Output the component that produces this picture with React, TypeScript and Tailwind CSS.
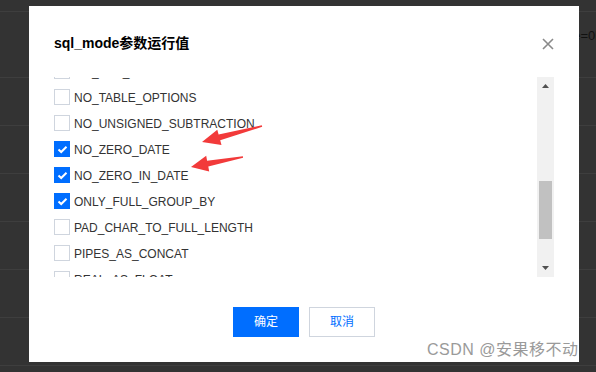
import React from "react";

const modes: { name: string; checked: boolean }[] = [
  { name: "NO_KEY_OPTIONS", checked: false },
  { name: "NO_TABLE_OPTIONS", checked: false },
  { name: "NO_UNSIGNED_SUBTRACTION", checked: false },
  { name: "NO_ZERO_DATE", checked: true },
  { name: "NO_ZERO_IN_DATE", checked: true },
  { name: "ONLY_FULL_GROUP_BY", checked: true },
  { name: "PAD_CHAR_TO_FULL_LENGTH", checked: false },
  { name: "PIPES_AS_CONCAT", checked: false },
  { name: "REAL_AS_FLOAT", checked: false },
  { name: "STRICT_ALL_TABLES", checked: false },
];

const sans = { fontFamily: '"Liberation Sans", Arial, "Noto Sans CJK SC", sans-serif' };

function Checkbox({ checked }: { checked: boolean }) {
  if (checked) {
    return (
      <span className="w-4 h-4 shrink-0 bg-[#006eff] flex items-center justify-center">
        <svg width="11" height="9" viewBox="0 0 11 9">
          <path d="M1.5 4.5 L4.2 7 L9.5 1.8" fill="none" stroke="#fff" strokeWidth="2" />
        </svg>
      </span>
    );
  }
  return <span className="w-4 h-4 shrink-0 border border-[#cfd5de] bg-white" />;
}

export default function App() {
  return (
    <div className="relative w-[596px] h-[372px] bg-[#333333] overflow-hidden" style={sans}>
      {/* table rows behind the overlay */}
      <div className="h-[12px] border-b border-[#3e3e3e]" />
      <div className="h-[66px] border-b border-[#3e3e3e] flex items-start pt-[17px] pl-[566px]">
        <span className="text-[13px] leading-[14px] text-[#111] whitespace-nowrap">de=0l</span>
      </div>
      {[0, 1, 2, 3, 4, 5].map(i => (
        <div key={i} className="h-[48px] border-b border-[#3e3e3e]" />
      ))}

      {/* dialog */}
      <div className="absolute left-[29px] top-[6px] w-[550px] h-[356px] bg-white px-[25px] pt-[27px]">
        <div className="h-[20px] flex items-center text-[14px] font-bold text-black">
          sql_mode参数运行值
        </div>
        <button className="absolute right-[25px] top-[32px] w-[12px] h-[12px]">
          <svg width="12" height="12" viewBox="0 0 12 12">
            <path d="M1 1 L11 11 M11 1 L1 11" stroke="#8a8a8a" strokeWidth="1.6" />
          </svg>
        </button>

        <div className="mt-[24px] h-[200px] flex">
          <div className="flex-1 overflow-hidden">
            <div className="-mt-[19px]">
              {modes.map(m => (
                <div key={m.name} className="h-[26px] flex items-center gap-1">
                  <Checkbox checked={m.checked} />
                  <span className="text-[12px] text-[#333] leading-none mt-[2px]">{m.name}</span>
                </div>
              ))}
            </div>
          </div>
          <div className="relative w-[17px] bg-[#f1f1f1]">
            <svg className="absolute left-[5px] top-[7px]" width="7" height="4" viewBox="0 0 7 4">
              <path d="M3.5 0 L7 4 L0 4 Z" fill="#505050" />
            </svg>
            <div className="absolute left-[2px] top-[104px] w-[13px] h-[58px] bg-[#c1c1c1]" />
            <svg className="absolute left-[5px] top-[189px]" width="7" height="4" viewBox="0 0 7 4">
              <path d="M0 0 L7 0 L3.5 4 Z" fill="#505050" />
            </svg>
          </div>
        </div>

        <div className="mt-[30px] flex justify-center gap-[10px]">
          <button className="w-[66px] h-[30px] bg-[#006eff] text-white text-[12px]">确定</button>
          <button className="w-[66px] h-[30px] bg-white border border-[#cfd5de] text-[#006eff] text-[12px]">取消</button>
        </div>
      </div>

      {/* annotation arrows */}
      <svg className="absolute left-0 top-0 pointer-events-none" width="596" height="372">
        <polygon points="202,142 217.3,129.7 218.6,134.5 261.8,125.2 262.2,126.8 220.2,140.3 221.5,145.1" fill="#f23a3a" />
        <polygon points="191,167 206.2,155.8 207.1,160.8 242.9,156.2 243.1,157.8 208.3,166.6 209.2,171.6" fill="#f23a3a" />
      </svg>

      {/* watermark */}
      <div
        className="absolute left-[427px] top-[341px] text-[16px] leading-[18px] tracking-[0.5px] text-[#9a9a9a] whitespace-nowrap"
        style={{ textShadow: "0 0 1px #fff, 0 0 1px #fff" }}
      >
        CSDN @安果移不动
      </div>
    </div>
  );
}
